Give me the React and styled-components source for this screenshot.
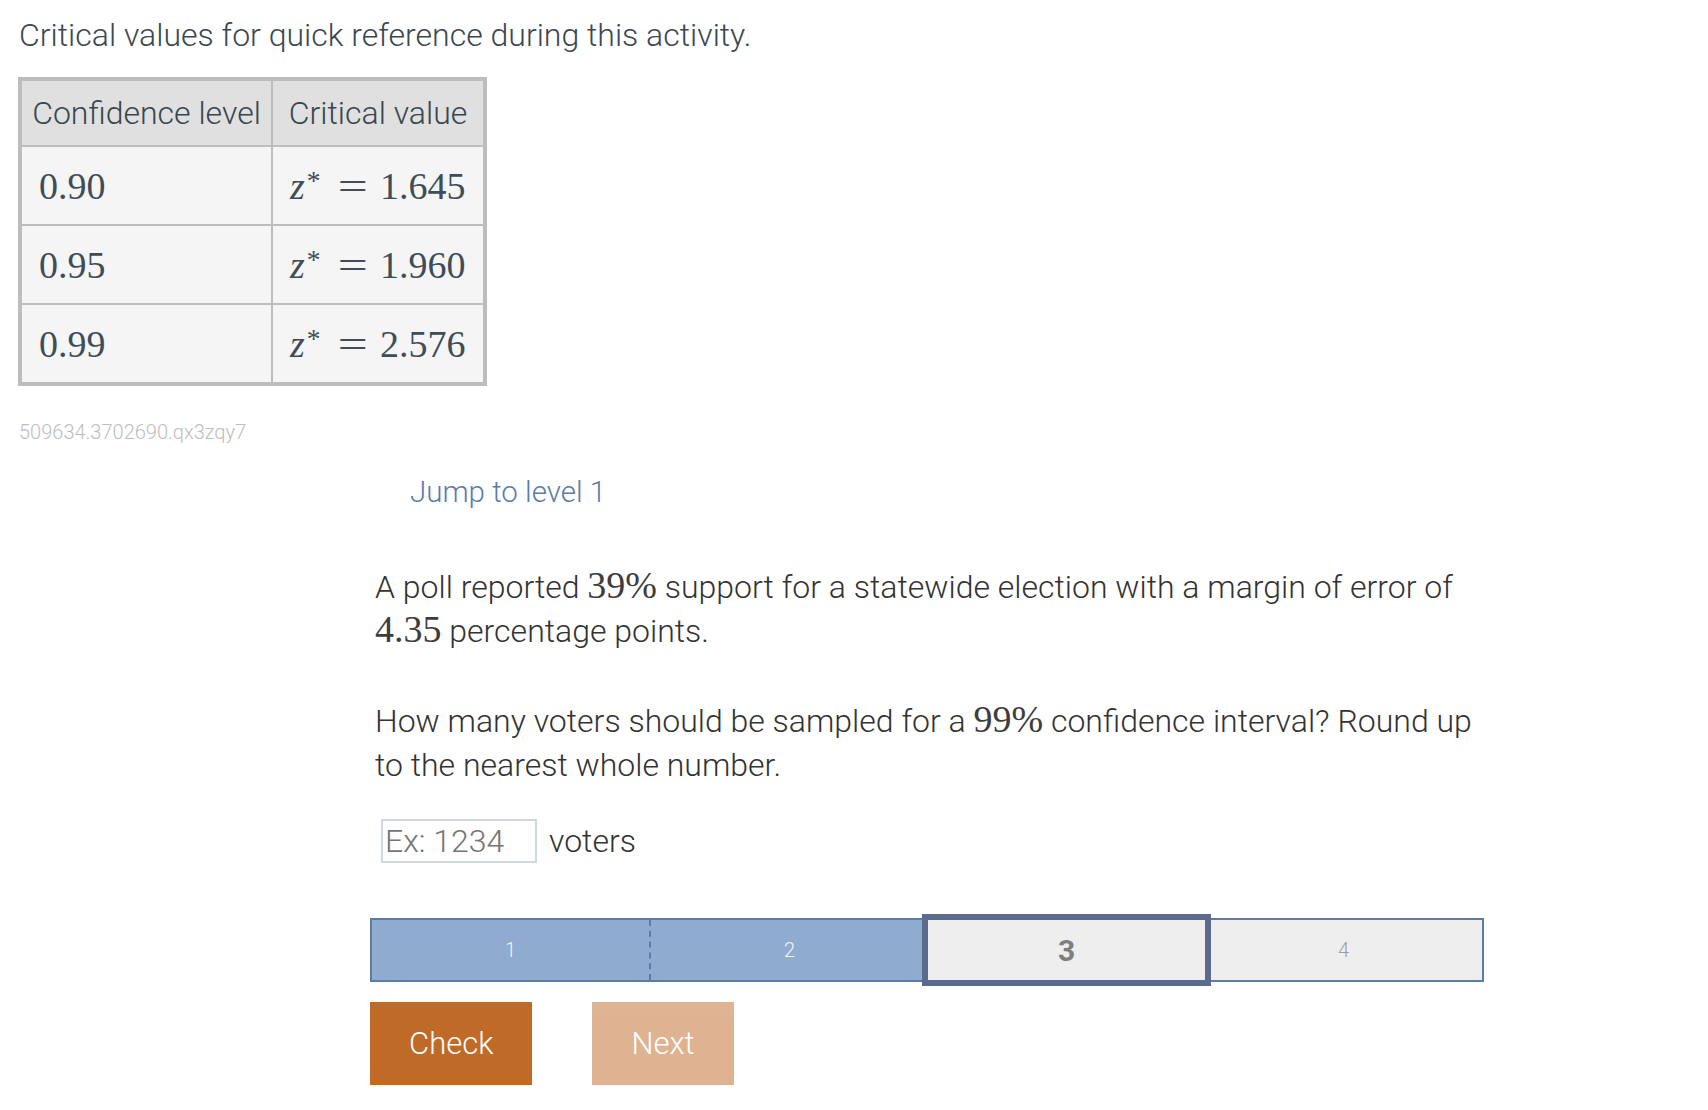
import React from 'react';
import styled, { createGlobalStyle } from 'styled-components';

const GlobalStyle = createGlobalStyle`
  html, body { margin: 0; padding: 0; background: #ffffff; }
  body {
    font-family: Roboto, "Noto Sans", "Liberation Sans", sans-serif;
    font-weight: 300;
    color: #333333;
  }
  *, *::before, *::after { box-sizing: border-box; }
`;

const Page = styled.div`
  padding: 13px 0 0 18px;
`;

const Title = styled.p`
  margin: 0 0 0 1px;
  font-size: 32px;
  line-height: 44px;
  color: #3b4850;
`;

const RefTable = styled.table`
  margin-top: 20px;
  table-layout: fixed;
  width: 469px;
  border-collapse: separate;
  border-spacing: 2px;
  border: 2px solid #bdbdbd;
  background: #bdbdbd;
`;

const Col = styled.col`
  width: ${(p) => p.$w}px;
`;

const HeadCell = styled.th`
  height: 64px;
  padding: 0;
  background: #e0e0e0;
  font-size: 32px;
  font-weight: 300;
  color: #37474f;
  text-align: center;
  white-space: nowrap;
`;

const BodyCell = styled.td`
  height: 77px;
  padding: 0 0 0 17px;
  background: #f5f5f5;
  font-family: "Liberation Serif", "DejaVu Serif", serif;
  font-weight: 400;
  font-size: 38px;
  color: #3e4d57;
  white-space: nowrap;
`;

const Var = styled.i`
  font-style: italic;
`;

const Star = styled.sup`
  font-size: 0.72em;
  line-height: 0;
  vertical-align: 0.32em;
  margin-left: 2px;
`;

const Eq = styled.span`
  display: inline-block;
  margin: 0 16px 0 22px;
  transform: scaleX(1.4);
`;

const IdText = styled.div`
  margin-top: 34px;
  padding-left: 1px;
  font-size: 20px;
  line-height: 24px;
  color: #bdbdbd;
`;

const Main = styled.div`
  margin-left: 352px;
  width: 1114px;
`;

const JumpLink = styled.a`
  display: block;
  margin: 26px 0 0 40px;
  font-size: 29.5px;
  line-height: 44px;
  color: #5b7ca8;
  text-decoration: none;
  cursor: pointer;
`;

const Question = styled.div`
  margin-top: 51px;
  padding: 0 0 0 5px;
  font-size: 32px;
  line-height: 44px;
  color: #333333;
`;

const Para = styled.p`
  margin: 0;
  & + & {
    margin-top: 46px;
  }
`;

const M = styled.span`
  font-family: "Liberation Serif", "DejaVu Serif", serif;
  font-weight: 400;
  font-size: 38px;
  line-height: 1;
  color: #3d3d3d;
`;

const AnswerRow = styled.div`
  display: flex;
  align-items: center;
  gap: 12px;
  margin-top: 32px;
  padding-left: 11px;
`;

const NumberInput = styled.input`
  width: 156px;
  height: 44px;
  margin: 0;
  padding: 0 2px;
  border: 2px solid #cfd8dc;
  border-radius: 0;
  outline: none;
  font-family: Roboto, "Noto Sans", sans-serif;
  font-weight: 300;
  font-size: 32px;
  color: #333333;
  background: #ffffff;
  &::placeholder {
    color: #757575;
    opacity: 1;
  }
`;

const Unit = styled.span`
  font-size: 32px;
  line-height: 44px;
  color: #333333;
`;

const ProgressBar = styled.div`
  display: flex;
  height: 64px;
  margin-top: 55px;
  border: 2px solid #5b7ca5;
`;

const segBg = { done: '#8fabcf', current: '#eeeeee', todo: '#eeeeee' };

const Segment = styled.div`
  flex: 1;
  display: flex;
  align-items: center;
  justify-content: center;
  background: ${(p) => segBg[p.$state]};
  border-right: ${(p) => (p.$dashed ? '2px dashed #5b7ca5' : 'none')};
  font-size: ${(p) => (p.$state === 'current' ? '30px' : '20px')};
  font-weight: ${(p) => (p.$state === 'current' ? 700 : 300)};
  color: ${(p) =>
    p.$state === 'done' ? '#f2f5f9' : p.$state === 'current' ? '#7f7f7f' : '#9e9e9e'};
  ${(p) =>
    p.$state === 'current' &&
    `
    position: relative;
    z-index: 1;
    outline: 6px solid #5a6b8c;
  `}
`;

const Actions = styled.div`
  display: flex;
  gap: 60px;
  margin-top: 20px;
`;

const ActionButton = styled.button`
  height: 83px;
  padding: 0 39px;
  border: none;
  border-radius: 0;
  background: #c06a28;
  color: #ffffff;
  font-family: Roboto, "Noto Sans", sans-serif;
  font-weight: 300;
  font-size: 31px;
  opacity: ${(p) => (p.disabled ? 0.5 : 1)};
  cursor: ${(p) => (p.disabled ? 'default' : 'pointer')};
`;

const rows = [
  ['0.90', '1.645'],
  ['0.95', '1.960'],
  ['0.99', '2.576'],
];

const levels = [
  { n: 1, state: 'done', dashed: true },
  { n: 2, state: 'done' },
  { n: 3, state: 'current' },
  { n: 4, state: 'todo' },
];

export default function App() {
  return (
    <>
      <GlobalStyle />
      <Page>
        <Title>Critical values for quick reference during this activity.</Title>
        <RefTable>
          <colgroup>
            <Col $w={249} />
            <Col $w={210} />
          </colgroup>
          <thead>
            <tr>
              <HeadCell>Confidence level</HeadCell>
              <HeadCell>Critical value</HeadCell>
            </tr>
          </thead>
          <tbody>
            {rows.map(([level, value]) => (
              <tr key={level}>
                <BodyCell>{level}</BodyCell>
                <BodyCell>
                  <Var>z</Var>
                  <Star>*</Star>
                  <Eq>=</Eq>
                  {value}
                </BodyCell>
              </tr>
            ))}
          </tbody>
        </RefTable>
        <IdText>509634.3702690.qx3zqy7</IdText>

        <Main>
          <JumpLink>Jump to level 1</JumpLink>
          <Question>
            <Para>
              A poll reported <M>39%</M> support for a statewide election with a margin of error of{' '}
              <M>4.35</M> percentage points.
            </Para>
            <Para>
              How many voters should be sampled for a <M>99%</M> confidence interval? Round up to the
              nearest whole number.
            </Para>
          </Question>
          <AnswerRow>
            <NumberInput type="text" placeholder="Ex: 1234" />
            <Unit>voters</Unit>
          </AnswerRow>
          <ProgressBar>
            {levels.map((l) => (
              <Segment key={l.n} $state={l.state} $dashed={l.dashed}>
                {l.n}
              </Segment>
            ))}
          </ProgressBar>
          <Actions>
            <ActionButton>Check</ActionButton>
            <ActionButton disabled>Next</ActionButton>
          </Actions>
        </Main>
      </Page>
    </>
  );
}
